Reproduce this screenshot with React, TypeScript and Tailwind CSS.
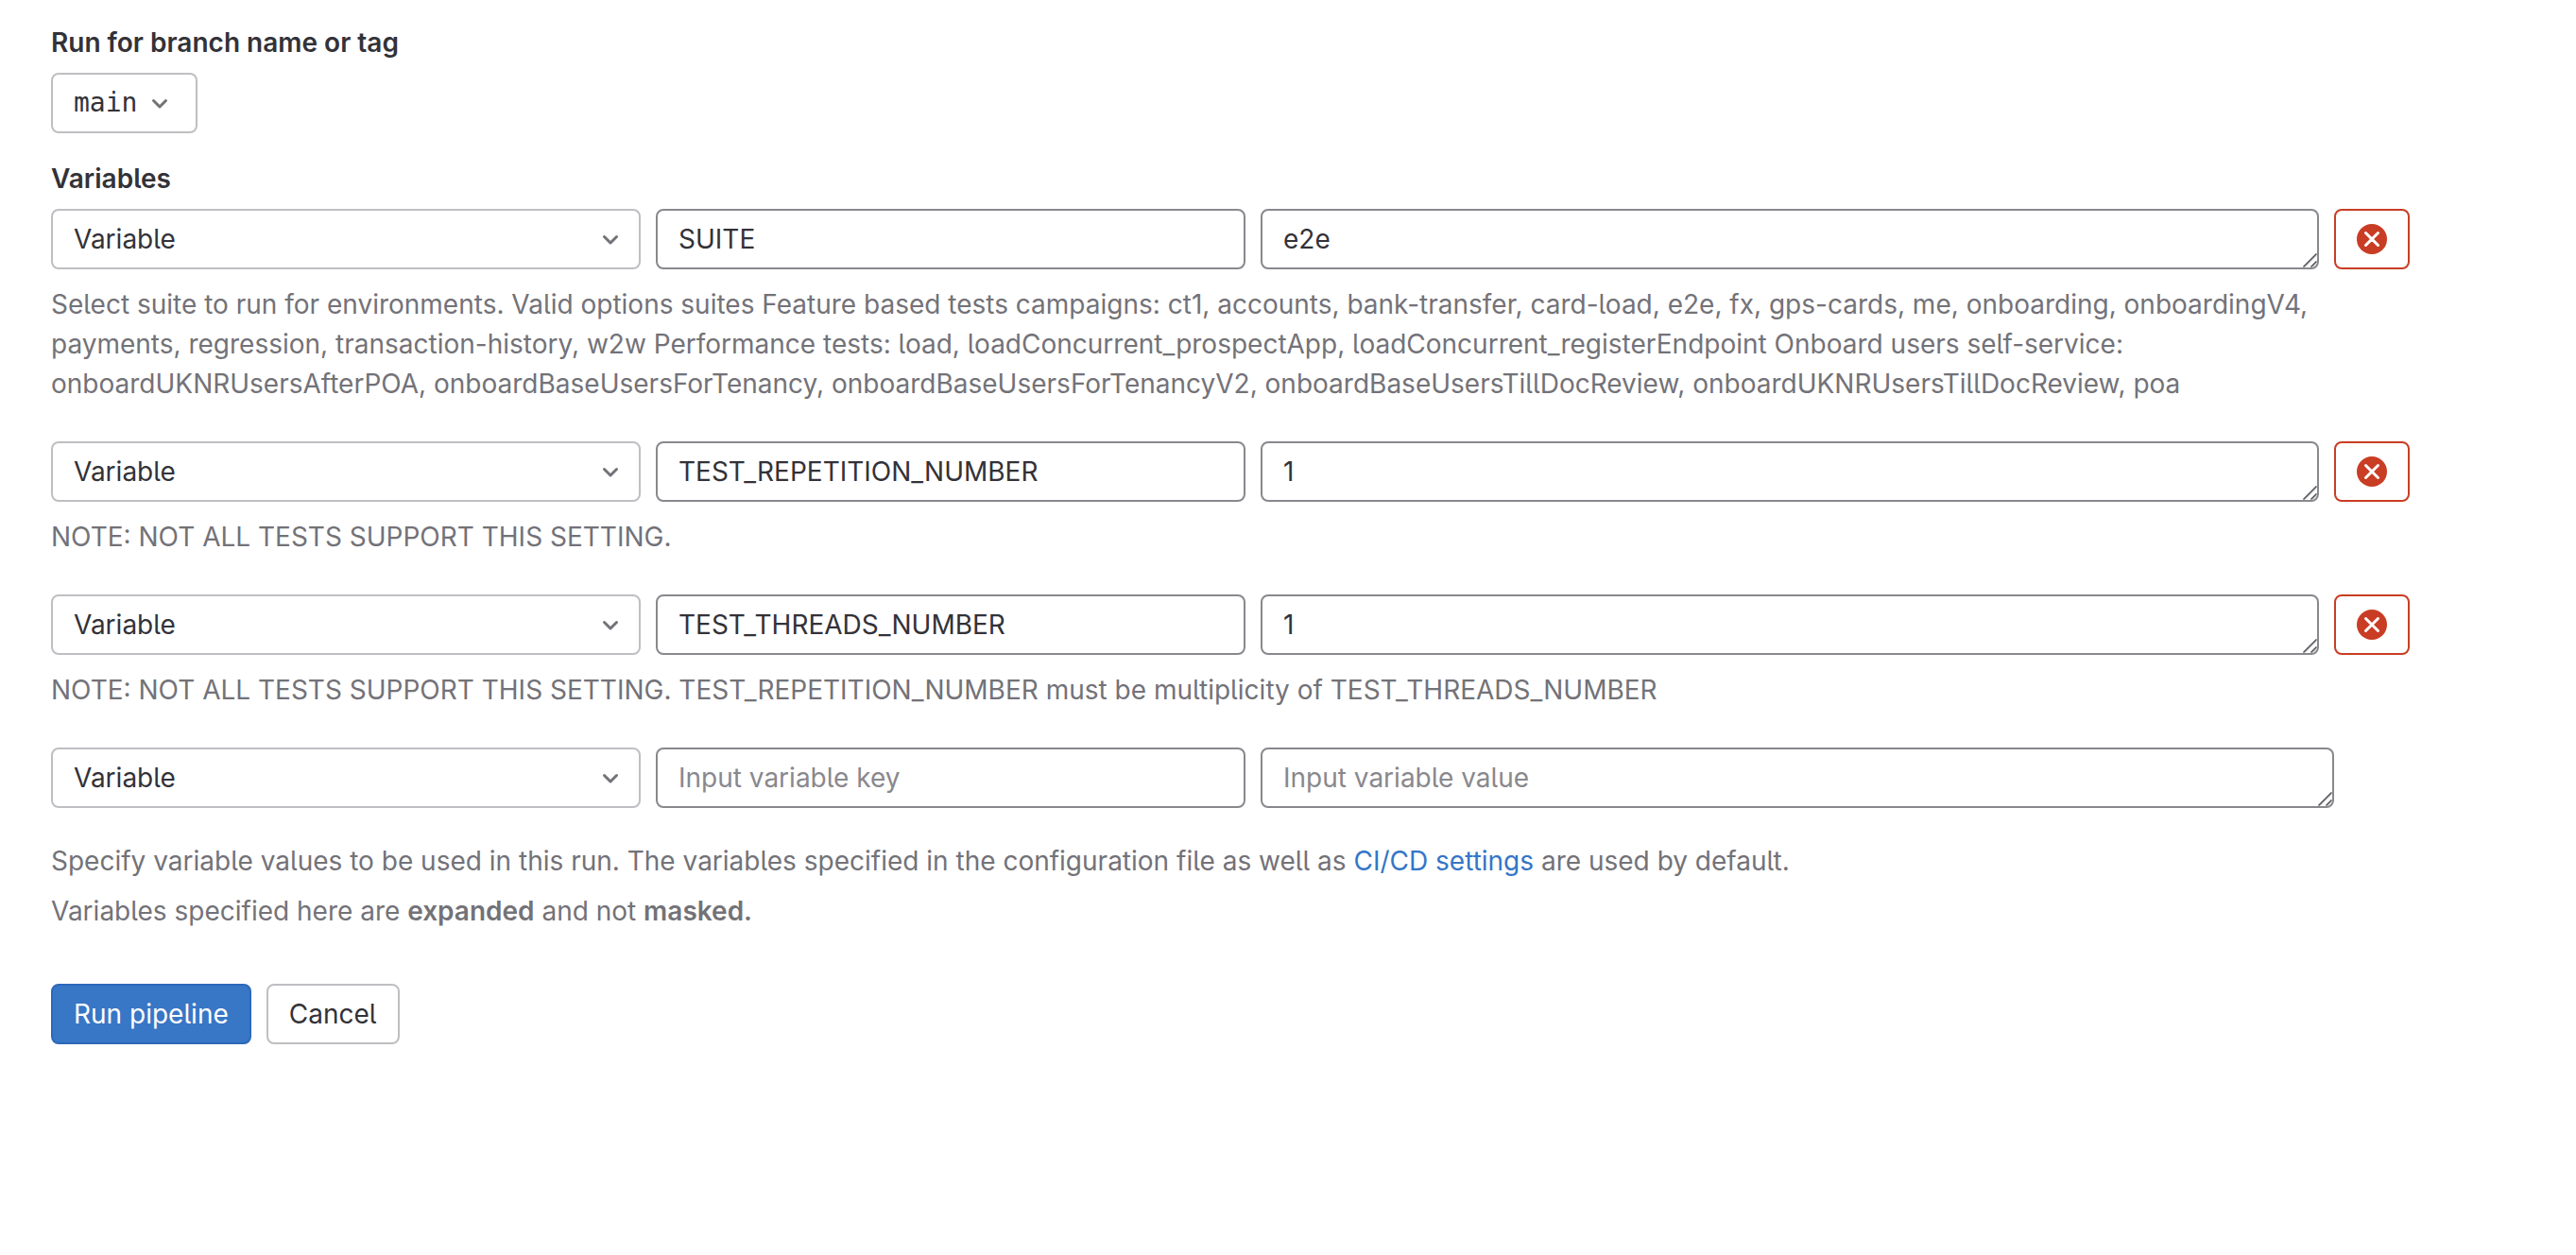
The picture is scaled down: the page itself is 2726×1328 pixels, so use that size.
import { useState } from "react";
import clsx from "clsx";

type Variable = {
  id: number;
  key: string;
  value: string;
  description?: string;
};

const initialVariables: Variable[] = [
  {
    id: 1,
    key: "SUITE",
    value: "e2e",
    description:
      "Select suite to run for environments. Valid options suites Feature based tests campaigns: ct1, accounts, bank-transfer, card-load, e2e, fx, gps-cards, me, onboarding, onboardingV4, payments, regression, transaction-history, w2w Performance tests: load, loadConcurrent_prospectApp, loadConcurrent_registerEndpoint Onboard users self-service: onboardUKNRUsersAfterPOA, onboardBaseUsersForTenancy, onboardBaseUsersForTenancyV2, onboardBaseUsersTillDocReview, onboardUKNRUsersTillDocReview, poa",
  },
  {
    id: 2,
    key: "TEST_REPETITION_NUMBER",
    value: "1",
    description: "NOTE: NOT ALL TESTS SUPPORT THIS SETTING.",
  },
  {
    id: 3,
    key: "TEST_THREADS_NUMBER",
    value: "1",
    description:
      "NOTE: NOT ALL TESTS SUPPORT THIS SETTING. TEST_REPETITION_NUMBER must be multiplicity of TEST_THREADS_NUMBER",
  },
  { id: 4, key: "", value: "" },
];

const ChevronDown = ({ className }: { className?: string }) => (
  <svg viewBox="0 0 16 16" fill="none" aria-hidden="true" className={clsx("h-8 w-8 text-[#737278]", className)}>
    <path d="M4.75 6.75 8 10l3.25-3.25" stroke="currentColor" strokeWidth="1.5" strokeLinecap="round" strokeLinejoin="round" />
  </svg>
);

const ClearIcon = () => (
  <svg viewBox="0 0 32 32" fill="none" aria-hidden="true" className="h-8 w-8">
    <circle cx="16" cy="16" r="16" fill="#c93d24" />
    <path d="m9.5 9.5 13 13m0-13-13 13" stroke="#fff" strokeWidth="3" strokeLinecap="round" />
  </svg>
);

const ResizeGrip = () => (
  <svg
    viewBox="0 0 16 16"
    fill="none"
    aria-hidden="true"
    className="pointer-events-none absolute right-0.5 bottom-0.5 h-4 w-4"
  >
    <path d="M1.5 15.5 15.5 1.5M9.5 15.5l6-6" stroke="#4b4b50" strokeWidth="1.5" />
    <path d="M3.5 15.5l12-12M11.5 15.5l4-4" stroke="#d4d4d8" strokeWidth="1" />
  </svg>
);

const fieldClass =
  "h-16 rounded-lg border-2 border-[#89888d] bg-white px-[22px] text-[#333238] placeholder:text-[#89888d]";

type RowProps = {
  variable: Variable;
  onChange: (variable: Variable) => void;
  onRemove?: () => void;
};

const VariableRow = ({ variable, onChange, onRemove }: RowProps) => (
  <div>
    <div className="flex">
      <div className="relative w-1/4 shrink-0">
        <select
          aria-label="Variable type"
          className="h-16 w-full appearance-none rounded-lg border-2 border-[#bfbfc3] bg-white px-[22px] text-[#333238]"
        >
          <option>Variable</option>
          <option>File</option>
        </select>
        <ChevronDown className="pointer-events-none absolute top-4 right-4" />
      </div>
      <input
        type="text"
        aria-label="Variable key"
        placeholder="Input variable key"
        value={variable.key}
        onChange={(e) => onChange({ ...variable, key: e.target.value })}
        className={clsx(fieldClass, "ml-4 w-1/4 shrink-0")}
      />
      <div className={clsx("relative ml-4 flex-1", !onRemove && "mr-20")}>
        <textarea
          rows={1}
          aria-label="Variable value"
          placeholder="Input variable value"
          value={variable.value}
          onChange={(e) => onChange({ ...variable, value: e.target.value })}
          className={clsx(fieldClass, "block w-full resize-none overflow-hidden py-[9px]")}
        />
        <ResizeGrip />
      </div>
      {onRemove && (
        <button
          type="button"
          aria-label="Remove variable"
          onClick={onRemove}
          className="ml-4 flex h-16 w-20 shrink-0 items-center justify-center rounded-lg border-2 border-[#c93d24] bg-white"
        >
          <ClearIcon />
        </button>
      )}
    </div>
    {variable.description && <p className="mt-4 text-[#737278]">{variable.description}</p>}
  </div>
);

const App = () => {
  const [variables, setVariables] = useState(initialVariables);

  const update = (next: Variable) => setVariables(variables.map((v) => (v.id === next.id ? next : v)));
  const remove = (id: number) => setVariables(variables.filter((v) => v.id !== id));

  return (
    <form
      onSubmit={(e) => e.preventDefault()}
      className="min-h-screen bg-white pt-6 pr-44 pl-[54px] font-['Inter',sans-serif] text-[28px] leading-[42px] text-[#333238] [font-feature-settings:'cv05']"
    >
      <div className="mb-[27px]">
        <label htmlFor="ref" className="mb-[11px] block font-semibold">
          Run for branch name or tag
        </label>
        <button
          id="ref"
          type="button"
          className="flex h-16 items-center rounded-lg border-2 border-[#bfbfc3] bg-white px-[22px]"
        >
          <span className="font-['DejaVu_Sans_Mono',monospace]">main</span>
          <ChevronDown className="ml-2" />
        </button>
      </div>

      <fieldset className="mb-[35px]">
        <legend className="mb-[11px] font-semibold">Variables</legend>
        <div className="flex flex-col gap-10">
          {variables.map((variable, i) => (
            <VariableRow
              key={variable.id}
              variable={variable}
              onChange={update}
              onRemove={i < variables.length - 1 ? () => remove(variable.id) : undefined}
            />
          ))}
        </div>
      </fieldset>

      <div className="text-[#737278]">
        <p className="mb-[11px]">
          Specify variable values to be used in this run. The variables specified in the configuration file as well as{" "}
          <a href="#settings" className="text-[#3575c7]">
            CI/CD settings
          </a>{" "}
          are used by default.
        </p>
        <p>
          Variables specified here are <strong className="font-semibold">expanded</strong> and not{" "}
          <strong className="font-semibold">masked.</strong>
        </p>
      </div>

      <div className="mt-14 flex gap-4">
        <button type="submit" className="h-16 rounded-lg border-2 border-[#2d68b9] bg-[#3876c6] px-[22px] text-white">
          Run pipeline
        </button>
        <button type="button" className="h-16 rounded-lg border-2 border-[#bfbfc3] bg-white px-[22px]">
          Cancel
        </button>
      </div>
    </form>
  );
};

export default App;
